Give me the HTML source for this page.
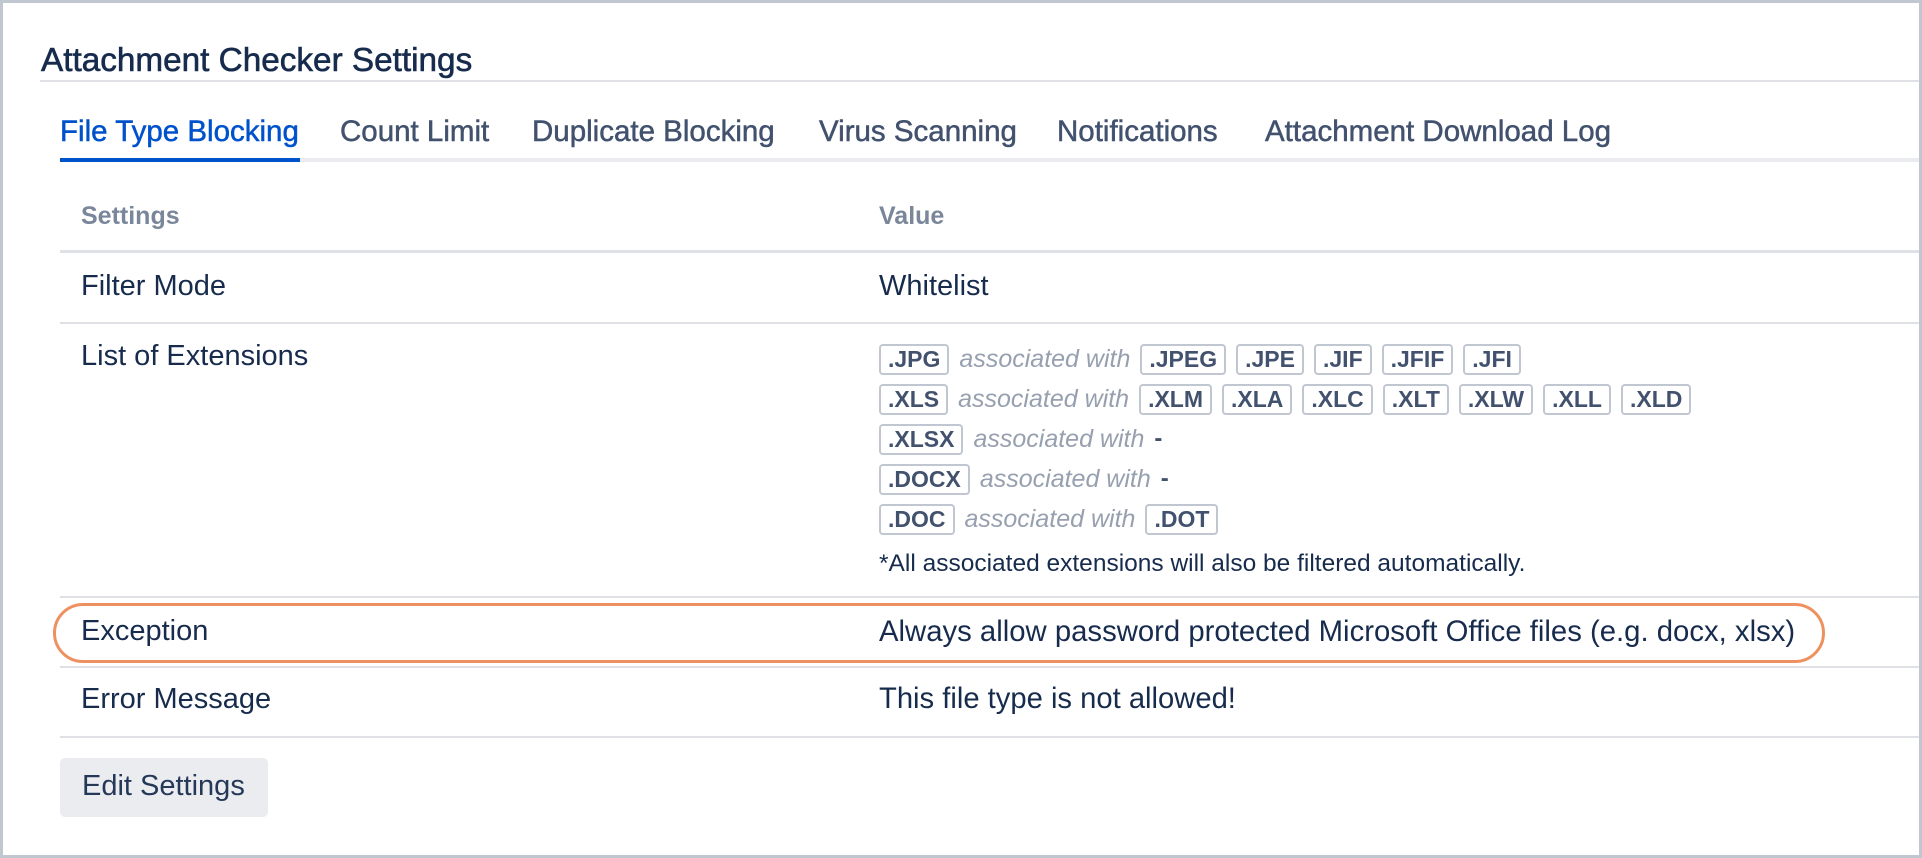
<!DOCTYPE html>
<html><head><meta charset="utf-8"><style>
html,body{margin:0;padding:0;}
body{width:1922px;height:858px;position:relative;overflow:hidden;background:#fff;font-family:"Liberation Sans",Arial,sans-serif;color:#172b4d;}
.frame{position:absolute;left:0;top:0;width:1916px;height:852px;border:3px solid #c1c7d0;}
.t{position:absolute;white-space:nowrap;line-height:1;}
.line{position:absolute;background:#dfe1e6;}
.tab{position:absolute;top:117px;font-size:29.5px;line-height:1;color:#42526e;white-space:nowrap;-webkit-text-stroke:0.5px #42526e;}
.row{position:absolute;left:879px;height:30px;white-space:nowrap;display:flex;align-items:center;}
.b{display:inline-block;box-sizing:border-box;height:31px;line-height:27px;border:2px solid #c1c7d0;border-radius:4px;padding:0 7px;font-weight:bold;font-size:23px;color:#42526e;margin-right:10px;}
.a{font-style:italic;color:#97a0af;font-size:25px;margin-right:10px;}
.d{font-size:24px;color:#42526e;font-weight:bold;}
</style></head><body>
<div class="frame"></div>
<div class="t" style="left:41px;top:44px;font-size:33.3px;-webkit-text-stroke:0.6px #172b4d;">Attachment Checker Settings</div>
<div class="line" style="left:40px;top:80px;width:1879px;height:2px;"></div>

<div class="tab" style="left:60px;color:#0052cc;-webkit-text-stroke:0.5px #0052cc;">File Type Blocking</div>
<div class="tab" style="left:340px;">Count Limit</div>
<div class="tab" style="left:532px;">Duplicate Blocking</div>
<div class="tab" style="left:819px;">Virus Scanning</div>
<div class="tab" style="left:1057px;">Notifications</div>
<div class="tab" style="left:1265px;">Attachment Download Log</div>
<div class="line" style="left:60px;top:158px;width:1859px;height:4px;background:#ebecf0;"></div>
<div class="line" style="left:60px;top:158px;width:240px;height:4px;background:#0052cc;"></div>

<div class="t" style="left:81px;top:204px;font-size:25px;font-weight:bold;color:#7a869a;">Settings</div>
<div class="t" style="left:879px;top:204px;font-size:25px;font-weight:bold;color:#7a869a;">Value</div>
<div class="line" style="left:60px;top:250px;width:1859px;height:3px;"></div>

<div class="t" style="left:81px;top:272px;font-size:29px;">Filter Mode</div>
<div class="t" style="left:879px;top:272px;font-size:29px;">Whitelist</div>
<div class="line" style="left:60px;top:322px;width:1859px;height:2px;"></div>

<div class="t" style="left:81px;top:342px;font-size:29px;">List of Extensions</div>
<div class="row" style="top:344px;"><span class="b">.JPG</span><span class="a">associated with</span><span class="b">.JPEG</span><span class="b">.JPE</span><span class="b">.JIF</span><span class="b">.JFIF</span><span class="b">.JFI</span></div>
<div class="row" style="top:384px;"><span class="b">.XLS</span><span class="a">associated with</span><span class="b">.XLM</span><span class="b">.XLA</span><span class="b">.XLC</span><span class="b">.XLT</span><span class="b">.XLW</span><span class="b">.XLL</span><span class="b">.XLD</span></div>
<div class="row" style="top:424px;"><span class="b">.XLSX</span><span class="a">associated with</span><span class="d">-</span></div>
<div class="row" style="top:464px;"><span class="b">.DOCX</span><span class="a">associated with</span><span class="d">-</span></div>
<div class="row" style="top:504px;"><span class="b">.DOC</span><span class="a">associated with</span><span class="b">.DOT</span></div>
<div class="t" style="left:879px;top:552px;font-size:24.5px;">*All associated extensions will also be filtered automatically.</div>
<div class="line" style="left:60px;top:596px;width:1859px;height:2px;"></div>

<div style="position:absolute;left:53px;top:603px;width:1766px;height:54px;border:3px solid #ee9160;border-radius:30px;"></div>
<div class="t" style="left:81px;top:617px;font-size:29px;">Exception</div>
<div class="t" style="left:879px;top:617px;font-size:29.3px;">Always allow password protected Microsoft Office files (e.g. docx, xlsx)</div>
<div class="line" style="left:60px;top:666px;width:1859px;height:2px;"></div>

<div class="t" style="left:81px;top:685px;font-size:29px;">Error Message</div>
<div class="t" style="left:879px;top:685px;font-size:29.2px;">This file type is not allowed!</div>
<div class="line" style="left:60px;top:736px;width:1859px;height:2px;"></div>

<div style="position:absolute;left:60px;top:758px;width:208px;height:59px;background:#ebecf0;border-radius:5px;"></div>
<div class="t" style="left:82px;top:772px;font-size:29px;color:#253858;">Edit Settings</div>
</body></html>
